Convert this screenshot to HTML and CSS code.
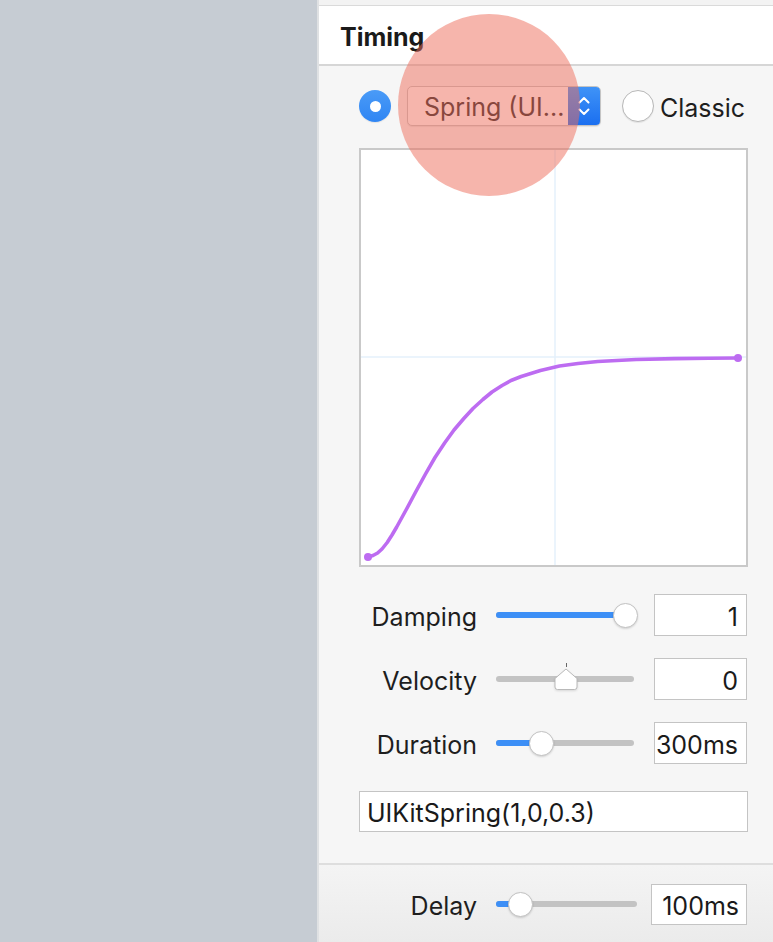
FILE: index.html
```html
<!DOCTYPE html>
<html>
<head>
<meta charset="utf-8">
<link rel="stylesheet" href="styles.css">
</head>
<body>
<div class="app">
  <div class="canvas-area"></div>
  <div class="panel">
    <div class="topstrip"></div>
    <div class="header">Timing</div>
    <div class="body">
      <div class="mode-row">
        <span class="radio checked"><span class="dot"></span></span>
        <div class="popup">
          <span class="popup-label">Spring (UI...</span>
          <span class="stepper">
            <svg width="14" height="26" viewBox="0 0 14 26"><path d="M2.5 9.5 L7 5 L11.5 9.5" fill="none" stroke="#fff" stroke-width="2" stroke-linecap="round" stroke-linejoin="round"/><path d="M2.5 16.5 L7 21 L11.5 16.5" fill="none" stroke="#fff" stroke-width="2" stroke-linecap="round" stroke-linejoin="round"/></svg>
          </span>
        </div>
        <span class="radio"></span>
        <span class="radio-label">Classic</span>
      </div>
      <div class="graph">
        <svg width="389" height="419" viewBox="0 0 389 419">
          <line x1="196" y1="0" x2="196" y2="419" stroke="#e4f0fb" stroke-width="1.5"/>
          <line x1="0" y1="209" x2="389" y2="209" stroke="#e4f0fb" stroke-width="1.5"/>
          <polyline fill="none" stroke="#bd6cf1" stroke-width="3.6" stroke-linejoin="round" stroke-linecap="round"
            points="9,409 14,407.5 18.6,405 23,401 28.2,394.5 33,387 37.7,379 47.3,361.5 56.9,343.5 66.5,326 76,309.5 85.6,295 95,282 104.8,270.5 114,260.5 123.9,251.5 133,244 143.1,237.5 152,232.5 162.2,228.5 181.4,222.5 200.5,218 219,215.5 238.8,213.5 277.1,211.5 315.4,210.6 350,210.2 379,210"/>
          <circle cx="9" cy="409" r="4" fill="#bd6cf1"/>
          <circle cx="379" cy="210" r="4" fill="#bd6cf1"/>
        </svg>
      </div>
      <div class="param-rows">
        <div class="param">
          <span class="param-label">Damping</span>
          <div class="slider">
            <div class="track"><div class="fill" style="width:128px"></div></div>
            <span class="thumb" style="left:128px"></span>
          </div>
          <span class="numbox">1</span>
        </div>
        <div class="param">
          <span class="param-label">Velocity</span>
          <div class="slider">
            <div class="track"></div>
            <span class="tick" style="left:70px"></span>
            <span class="pointer" style="left:70px">
              <svg width="26" height="26" viewBox="0 0 26 26"><path d="M13 3 L24 12.5 L24 21 Q24 23.5 21.5 23.5 L4.5 23.5 Q2 23.5 2 21 L2 12.5 Z" fill="#fff" stroke="#b9b9b9" stroke-width="1"/></svg>
            </span>
          </div>
          <span class="numbox">0</span>
        </div>
        <div class="param">
          <span class="param-label">Duration</span>
          <div class="slider">
            <div class="track"><div class="fill" style="width:44px"></div></div>
            <span class="thumb" style="left:44px"></span>
          </div>
          <span class="numbox">300ms</span>
        </div>
      </div>
      <div class="expr">UIKitSpring(1,0,0.3)</div>
    </div>
    <div class="footer">
      <div class="param delay">
        <span class="param-label">Delay</span>
        <div class="slider">
          <div class="track"><div class="fill" style="width:23px"></div></div>
          <span class="thumb" style="left:23px"></span>
        </div>
        <span class="numbox">100ms</span>
      </div>
    </div>
  </div>
  <div class="touch"></div>
</div>
</body>
</html>
```
FILE: styles.css
```css
html, body {
  margin: 0;
  padding: 0;
}
body {
  font-family: "Inter", "Open Sans", "Liberation Sans", sans-serif;
  color: #1e1e1e;
  overflow: hidden;
}
.app {
  position: relative;
  display: flex;
  width: 773px;
  height: 942px;
  overflow: hidden;
}
.canvas-area {
  width: 317px;
  flex: none;
  background: #c6ccd3;
}
.panel {
  flex: 1;
  display: flex;
  flex-direction: column;
  background: #f6f6f6;
  border-left: 2px solid #dfe1e3;
}
.topstrip {
  height: 5px;
  background: #f3f3f3;
  border-bottom: 1px solid #dadada;
}
.header {
  height: 54px;
  padding-top: 4px;
  background: #fff;
  border-bottom: 2px solid #d6d6d6;
  font-weight: 700;
  font-size: 25px;
  padding-left: 21px;
  display: flex;
  align-items: center;
  color: #1a1a1a;
}
.body {
  padding: 20px 25px 31px 40px;
  border-bottom: 2px solid #dedede;
}
.mode-row {
  display: flex;
  align-items: center;
  height: 40px;
}
.radio {
  width: 30px;
  height: 30px;
  border-radius: 50%;
  background: #fff;
  border: 1px solid #b8b8b8;
  box-shadow: 0 1px 1px rgba(0,0,0,0.08);
  display: flex;
  align-items: center;
  justify-content: center;
  flex: none;
}
.radio.checked {
  width: 32px;
  height: 32px;
  border: none;
  background: linear-gradient(#4a9bf7, #2f85f3);
}
.radio .dot {
  width: 11px;
  height: 11px;
  border-radius: 50%;
  background: #fff;
}
.popup {
  margin-left: 16px;
  width: 192px;
  height: 38px;
  border: 1px solid #c4c4c4;
  border-radius: 5px;
  background: #fff;
  display: flex;
  align-items: stretch;
  box-shadow: 0 1px 1px rgba(0,0,0,0.08);
  overflow: hidden;
}
.popup-label {
  flex: 1;
  font-size: 25px;
  display: flex;
  align-items: center;
  padding-left: 16px;
  padding-top: 2px;
  color: #222;
  white-space: nowrap;
}
.stepper {
  width: 32px;
  flex: none;
  background: linear-gradient(#3f93f7, #1b6ff0);
  display: flex;
  align-items: center;
  justify-content: center;
}
.mode-row .radio:not(.checked) {
  margin-left: 21px;
}
.radio-label {
  font-size: 25px;
  margin-left: 6px;
  padding-top: 3px;
  color: #1e1e1e;
}
.graph {
  margin-top: 22px;
  width: 385px;
  height: 415px;
  border: 2px solid #c9c9c9;
  background: #fff;
  position: relative;
  overflow: hidden;
}
.graph svg {
  display: block;
  margin: -2px 0 0 -2px;
}
.param-rows {
  margin-top: 27px;
  display: flex;
  flex-direction: column;
  gap: 22px;
}
.param {
  display: flex;
  align-items: center;
  height: 42px;
}
.param-label {
  width: 118px;
  text-align: right;
  font-size: 25px;
  padding-top: 4px;
  color: #1e1e1e;
}
.slider {
  position: relative;
  width: 138px;
  height: 42px;
  margin-left: 19px;
  display: flex;
  align-items: center;
}
.track {
  width: 100%;
  height: 6px;
  border-radius: 3px;
  background: #c3c3c3;
  overflow: hidden;
}
.fill {
  height: 100%;
  background: #3d8ff6;
}
.thumb {
  position: absolute;
  top: 9px;
  width: 23px;
  height: 23px;
  margin-left: -11.5px;
  border-radius: 50%;
  background: #fff;
  border: 1px solid #c2c2c2;
  box-shadow: 0 1px 2px rgba(0,0,0,0.15);
}
.pointer {
  position: absolute;
  top: 8px;
  margin-left: -13px;
  width: 26px;
  height: 26px;
}
.pointer svg {
  display: block;
  filter: drop-shadow(0 1px 1px rgba(0,0,0,0.12));
}
.tick {
  position: absolute;
  top: 5px;
  width: 1px;
  height: 4px;
  background: #666;
}
.numbox {
  box-sizing: border-box;
  margin-left: 20px;
  width: 93px;
  height: 42px;
  border: 1px solid #c4c4c4;
  background: #fff;
  font-size: 25px;
  display: flex;
  align-items: center;
  justify-content: flex-end;
  padding: 4px 8px 0 0;
  color: #1a1a1a;
}
.expr {
  box-sizing: border-box;
  margin-top: 27px;
  height: 41px;
  border: 1px solid #c4c4c4;
  background: #fff;
  font-size: 25px;
  display: flex;
  align-items: center;
  padding: 3px 0 0 7px;
  color: #1a1a1a;
}
.footer {
  flex: 1;
  background: linear-gradient(#f4f4f4, #ebebeb);
  padding: 18px 25px 0 40px;
}
.delay .param-label {
  width: 118px;
}
.delay .slider {
  width: 141px;
}
.delay .numbox {
  margin-left: 14px;
  width: 96px;
  height: 41px;
  padding-right: 7px;
}
.touch {
  position: absolute;
  left: 398px;
  top: 14px;
  width: 182px;
  height: 182px;
  border-radius: 50%;
  background: rgba(237, 107, 89, 0.5);
  pointer-events: none;
}
```
